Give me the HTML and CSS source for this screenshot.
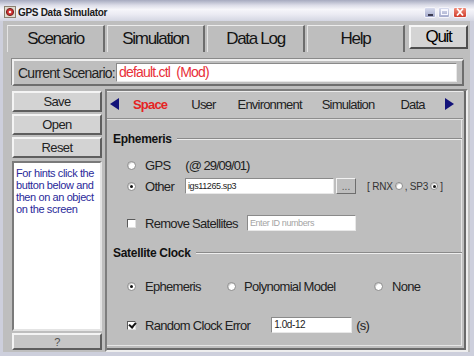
FILE: index.html
```html
<!DOCTYPE html>
<html lang="en">
<head>
    <meta charset="UTF-8">
    <title>GPS Data Simulator</title>
    <link rel="stylesheet" href="styles.css">
</head>
<body>
    <div class="window">
        <div class="titlebar">
            <svg class="app-icon" width="12" height="12" viewBox="0 0 12 12">
                <rect x="0.5" y="0.5" width="11" height="11" fill="#e0dcd0" stroke="#8a8070"/>
                <circle cx="6" cy="6" r="3.6" fill="#d03030" stroke="#702020"/>
                <circle cx="6" cy="6" r="1.3" fill="#f4f4f4"/>
            </svg>
            <span class="title">GPS Data Simulator</span>
            <div class="win-btns">
                <span class="win-btn min"><i></i></span>
                <span class="win-btn max"><i></i></span>
                <span class="win-btn close">
                    <svg width="12" height="10" viewBox="0 0 12 10"><path d="M3 1.5 L9 8.5 M9 1.5 L3 8.5" stroke="#fff" stroke-width="1.8"/></svg>
                </span>
            </div>
        </div>

        <div class="client">
            <div class="tabs">
                <div class="tab">Scenario</div>
                <div class="tab">Simulation</div>
                <div class="tab">Data Log</div>
                <div class="tab">Help</div>
                <div class="quit">Quit</div>
            </div>

            <div class="current">
                <span class="current-label">Current Scenario:</span>
                <div class="current-field">default.ctl&nbsp; (Mod)</div>
            </div>

            <div class="main">
                <div class="side">
                    <div class="side-btn">Save</div>
                    <div class="side-btn">Open</div>
                    <div class="side-btn">Reset</div>
                    <div class="hints">For hints click the<br>button below and<br>then on an object<br>on the screen</div>
                    <div class="help-btn">?</div>
                </div>

                <div class="panel">
                    <div class="subtabs">
                        <span class="arrow left"></span>
                        <span class="subtab active">Space</span>
                        <span class="subtab user">User</span>
                        <span class="subtab env">Environment</span>
                        <span class="subtab sim">Simulation</span>
                        <span class="subtab data">Data</span>
                        <span class="arrow right"></span>
                    </div>

                    <div class="section">
                        <div class="heading"><span>Ephemeris</span><i></i></div>
                        <div class="row gps">
                            <span class="radio"></span><span class="lbl">GPS</span>
                            <span class="date">(@ 29/09/01)</span>
                        </div>
                        <div class="row other">
                            <span class="radio on"></span><span class="lbl">Other</span>
                            <div class="field file">igs11265.sp3</div>
                            <div class="dots">...</div>
                            <span class="fmt">[ RNX <span class="radio sm"></span>, SP3 <span class="radio sm on"></span>]</span>
                        </div>
                        <div class="row remove">
                            <span class="check"></span><span class="lbl">Remove Satellites</span>
                            <div class="field ids">Enter ID numbers</div>
                        </div>

                        <div class="heading clock"><span>Satellite Clock</span><i></i></div>
                        <div class="row model">
                            <span class="radio on"></span><span class="lbl w-eph">Ephemeris</span>
                            <span class="radio"></span><span class="lbl w-poly">Polynomial Model</span>
                            <span class="radio"></span><span class="lbl">None</span>
                        </div>
                        <div class="row random">
                            <span class="check on"></span><span class="lbl">Random Clock Error</span>
                            <div class="field err">1.0d-12</div>
                            <span class="lbl unit">(s)</span>
                        </div>
                    </div>
                </div>
            </div>
        </div>
    </div>
</body>
</html>
```

FILE: styles.css
```css
*{
    padding: 0;
    margin: 0;
    box-sizing: border-box;
}

body{
    width: 474px;
    height: 356px;
    overflow: hidden;
    background: #cccdd8;
    font-family: "Liberation Sans", Arial, sans-serif;
}

.window {
    width: 474px;
    height: 356px;
    display: flex;
    flex-direction: column;
    border-left: 3px solid #cdcfdc;
    border-right: 4px solid #cdcfdc;
    border-bottom: 4px solid #cdcfdc;
}

/* title bar */
.titlebar {
    height: 21px;
    margin-left: -3px;
    margin-right: -4px;
    display: flex;
    align-items: center;
    padding: 3px 0 0 4px;
    background: linear-gradient(#a6aabf, #dcdde8 25%, #f6f6fa 45%, #eaeaf2 70%, #d4d6e2);
}

.title {
    font-weight: bold;
    font-size: 10px;
    letter-spacing: -0.3px;
    color: #1a1a1a;
    margin-left: 2px;
}

.win-btns {
    margin-left: auto;
    display: flex;
    gap: 2px;
    padding-right: 7px;
}

.win-btn {
    width: 12px;
    height: 11px;
    border-radius: 2px;
    border: 1px solid #f4f4fa;
    background: linear-gradient(#d8dcee, #a4aacc);
    display: flex;
    align-items: center;
    justify-content: center;
}

.win-btn.min i {
    width: 5px;
    height: 2px;
    background: #3a3a50;
    margin-top: 5px;
}

.win-btn.max i {
    width: 7px;
    height: 6px;
    border: 1px solid #f8f8ff;
    border-top-width: 2px;
}

.win-btn.close {
    width: 14px;
    margin-left: 1px;
    background: linear-gradient(#f08a78, #d03c2c);
}

/* client area */
.client {
    flex: 1;
    background: #bebebe;
    padding: 4px 2px 0 4px;
    display: flex;
    flex-direction: column;
}

.tabs {
    display: flex;
    height: 27px;
    gap: 2px;
}

.tab {
    width: 98px;
    font-size: 17px;
    letter-spacing: -1.3px;
    display: flex;
    align-items: center;
    justify-content: center;
    color: #141414;
    border-top: 1px solid #ececec;
    border-left: 1px solid #e4e4e4;
    border-right: 2px solid #6c6c6c;
}

.quit {
    margin-left: 2px;
    width: 59px;
    height: 24px;
    font-size: 17px;
    letter-spacing: -1.3px;
    display: flex;
    align-items: center;
    justify-content: center;
    background: #d4d4d4;
    border: 2px solid;
    border-color: #f6f6f6 #4e4e4e #4e4e4e #f6f6f6;
    color: #000;
}

.current {
    margin: 7px 4px 0 5px;
    height: 27px;
    display: flex;
    align-items: center;
    padding: 0 5px 0 4px;
    border: 2px solid;
    border-color: #f0f0f0 #6e6e6e #6e6e6e #f0f0f0;
    box-shadow: -1px -1px 0 #8a8a8a;
}

.current-label {
    font-size: 14px;
    letter-spacing: -0.75px;
    color: #222;
}

.current-field {
    flex: 1;
    height: 19px;
    margin-left: 1px;
    background: #fff;
    border: 1px solid;
    border-color: #8a8a8a #e8e8e8 #e8e8e8 #8a8a8a;
    color: #e8303a;
    font-size: 14px;
    letter-spacing: -0.8px;
    padding-left: 2px;
    line-height: 17px;
}

.main {
    flex: 1;
    display: flex;
    margin-top: 3px;
    padding-left: 5px;
    gap: 3px;
}

/* left column */
.side {
    width: 90px;
    display: flex;
    flex-direction: column;
    gap: 2px;
    padding: 2px 0 2px 0;
}

.side-btn, .help-btn {
    height: 21px;
    display: flex;
    align-items: center;
    justify-content: center;
    font-size: 13px;
    letter-spacing: -0.6px;
    color: #222;
    background: #d3d3d3;
    border: 2px solid;
    border-color: #f4f4f4 #5e5e5e #5e5e5e #f4f4f4;
}

.hints {
    flex: 1;
    margin-top: 1px;
    background: #fff;
    border: 2px solid;
    border-color: #7a7a7a #e4e4e4 #e4e4e4 #7a7a7a;
    color: #2a2a9a;
    font-size: 11px;
    letter-spacing: -0.4px;
    line-height: 12px;
    padding: 4px 2px;
}

.help-btn {
    height: 17px;
    font-size: 11px;
    background: #c6c6c6;
    color: #505050;
}

/* right panel */
.panel {
    flex: 1;
    border: 2px solid;
    border-color: #7e7e7e #eeeeee #eeeeee #7e7e7e;
    box-shadow: inset -2px -2px 0 #6a6a6a, inset -4px -4px 0 #bebebe, inset -5px -5px 0 #e6e6e6;
    display: flex;
    flex-direction: column;
}

.subtabs {
    height: 28px;
    display: flex;
    align-items: center;
    padding: 0 0 2px 3px;
    margin-right: 3px;
    border-top: 1px solid #ececec;
    border-bottom: 1px solid #8e8e8e;
    box-shadow: 0 1px 0 #e2e2e2;
    background: #c2c2c2;
    font-size: 13px;
    letter-spacing: -0.8px;
    color: #222;
}

.arrow {
    width: 0;
    height: 0;
    border-top: 6px solid transparent;
    border-bottom: 6px solid transparent;
}

.arrow.left {
    border-right: 9px solid #12127a;
}

.arrow.right {
    border-left: 9px solid #12127a;
    margin-left: 20px;
}

.subtab.active {
    margin-left: 14px;
    color: #e52424;
    font-weight: bold;
}

.subtab.user { margin-left: 24px; }
.subtab.env { margin-left: 22px; }
.subtab.sim { margin-left: 20px; }
.subtab.data { margin-left: 26px; }

.section {
    padding: 2px 4px 0 6px;
}

.heading {
    display: flex;
    align-items: center;
    font-size: 12px;
    font-weight: bold;
    letter-spacing: -0.3px;
    color: #111;
    height: 16px;
    margin-top: 10px;
}

.heading i {
    flex: 1;
    margin-left: 5px;
    height: 2px;
    border-top: 1px solid #8a8a8a;
    border-bottom: 1px solid #eeeeee;
}

.heading.clock {
    margin-top: 13px;
}

.row {
    display: flex;
    align-items: center;
    font-size: 13px;
    letter-spacing: -0.7px;
    color: #222;
    height: 18px;
    padding-left: 14px;
}

.row.gps { margin-top: 9px; }
.row.other { margin-top: 3px; }
.row.remove { margin-top: 19px; }
.row.model { margin-top: 16px; }
.row.random { margin-top: 21px; }

.lbl {
    margin-left: 9px;
}

.date {
    margin-left: 15px;
    letter-spacing: -1px;
}

.radio {
    width: 9px;
    height: 9px;
    border-radius: 50%;
    background: #fff;
    border: 1px solid #8a8a8a;
    box-shadow: inset 1px 1px 0 #d0d0d0;
    display: inline-flex;
    align-items: center;
    justify-content: center;
}

.radio.on::after {
    content: "";
    width: 3px;
    height: 3px;
    border-radius: 50%;
    background: #111;
}

.check {
    width: 9px;
    height: 9px;
    background: #fff;
    border: 1px solid;
    border-color: #5a5a5a #e0e0e0 #e0e0e0 #5a5a5a;
    position: relative;
}

.check.on::after {
    content: "";
    position: absolute;
    left: 2px;
    top: -1px;
    width: 3px;
    height: 5px;
    border-right: 2px solid #111;
    border-bottom: 2px solid #111;
    transform: rotate(40deg);
}

.field {
    background: #fff;
    border: 1px solid;
    border-color: #8a8a8a #e8e8e8 #e8e8e8 #8a8a8a;
    font-size: 9px;
    letter-spacing: -0.4px;
    height: 16px;
    line-height: 14px;
    padding-left: 2px;
    color: #222;
}

.field.file {
    width: 149px;
    margin-left: 11px;
}

.dots {
    margin-left: 2px;
    width: 20px;
    height: 16px;
    font-size: 10px;
    letter-spacing: 0;
    display: flex;
    justify-content: center;
    align-items: center;
    border: 1px solid;
    border-color: #f2f2f2 #6e6e6e #6e6e6e #f2f2f2;
    color: #555;
}

.fmt {
    margin-left: 11px;
    font-size: 10px;
    letter-spacing: -0.2px;
    display: flex;
    align-items: center;
    gap: 2px;
    color: #333;
}

.radio.sm {
    width: 8px;
    height: 8px;
}

.field.ids {
    width: 109px;
    margin-left: 9px;
    color: #a4a4a4;
}

.w-eph {
    width: 82px;
}

.w-poly {
    width: 130px;
    margin-left: 8px;
}

.field.err {
    width: 81px;
    margin-left: 21px;
    font-size: 10px;
}

.unit {
    margin-left: 4px;
}
```
